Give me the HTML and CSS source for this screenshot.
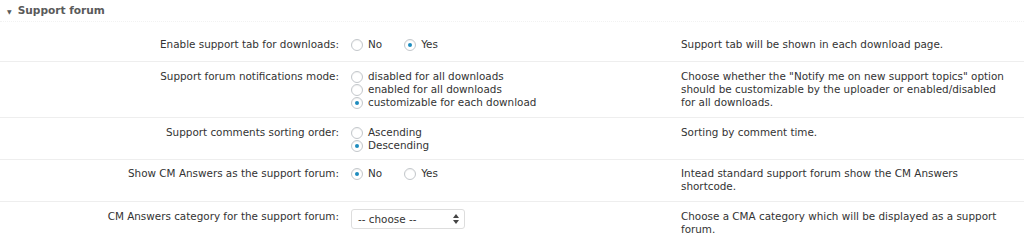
FILE: index.html
```html
<!DOCTYPE html>
<html lang="en">
<head>
    <meta charset="UTF-8">
    <title>Support forum settings</title>
    <link rel="stylesheet" href="styles.css">
</head>
<body>
    <div class="section-head">
        <span class="caret">&#9660;</span>
        <span class="section-title">Support forum</span>
    </div>

    <div class="settings">
        <div class="row">
            <div class="label">Enable support tab for downloads:</div>
            <div class="field">
                <div class="inline">
                    <span class="opt"><span class="radio"></span>No</span>
                    <span class="opt"><span class="radio checked"></span>Yes</span>
                </div>
            </div>
            <div class="desc">Support tab will be shown in each download page.</div>
        </div>

        <div class="row">
            <div class="label">Support forum notifications mode:</div>
            <div class="field">
                <div class="opt stack"><span class="radio"></span>disabled for all downloads</div>
                <div class="opt stack"><span class="radio"></span>enabled for all downloads</div>
                <div class="opt stack"><span class="radio checked"></span>customizable for each download</div>
            </div>
            <div class="desc">Choose whether the "Notify me on new support topics" option should be customizable by the uploader or enabled/disabled for all downloads.</div>
        </div>

        <div class="row tight">
            <div class="label">Support comments sorting order:</div>
            <div class="field">
                <div class="opt stack"><span class="radio"></span>Ascending</div>
                <div class="opt stack"><span class="radio checked"></span>Descending</div>
            </div>
            <div class="desc">Sorting by comment time.</div>
        </div>

        <div class="row tighter">
            <div class="label">Show CM Answers as the support forum:</div>
            <div class="field">
                <div class="inline">
                    <span class="opt"><span class="radio checked"></span>No</span>
                    <span class="opt"><span class="radio"></span>Yes</span>
                </div>
            </div>
            <div class="desc">Intead standard support forum show the CM Answers shortcode.</div>
        </div>

        <div class="row">
            <div class="label">CM Answers category for the support forum:</div>
            <div class="field">
                <div class="select">
                    <span>-- choose --</span>
                    <svg width="6" height="10" viewBox="0 0 6 10">
                        <path d="M3 0 L6 4 L0 4 Z M0 6 L6 6 L3 10 Z" fill="#444"/>
                    </svg>
                </div>
            </div>
            <div class="desc">Choose a CMA category which will be displayed as a support forum.</div>
        </div>
    </div>
</body>
</html>
```

FILE: styles.css
```css
body {
    margin: 0;
    background: #fff;
    font-family: "DejaVu Sans", Verdana, sans-serif;
    font-size: 10.4px;
    line-height: 13px;
    color: #333;
}
.section-head {
    display: flex;
    align-items: center;
    height: 21px;
    padding-left: 7px;
    border-bottom: 1px dotted #f2f2f2;
    color: #5a5a5a;
}
.caret {
    font-size: 6px;
    margin-right: 6px;
    margin-top: 1px;
}
.section-title {
    font-weight: bold;
    font-size: 10.6px;
}
.settings {
    margin-top: 8px;
}
.row {
    display: grid;
    grid-template-columns: 351px 330px 1fr;
    padding: 8px 0;
    border-bottom: 1px solid #eee;
}
.row.tight {
    padding-bottom: 7px;
}
.row.tighter {
    padding-top: 7px;
    padding-bottom: 8px;
}
.label {
    text-align: right;
    padding-right: 12px;
}
.desc {
    padding-right: 12px;
}
.inline {
    display: flex;
    gap: 22px;
    height: 17px;
    align-items: center;
    margin-top: -2px;
}
.opt {
    display: flex;
    align-items: center;
}
.stack {
    height: 13px;
}
.radio {
    box-sizing: border-box;
    width: 12px;
    height: 12px;
    border: 1px solid #c3c7cb;
    border-radius: 50%;
    margin-right: 5px;
    display: flex;
    align-items: center;
    justify-content: center;
    background: #fff;
    box-shadow: inset 0 1px 1px rgba(0,0,0,0.06);
}
.radio.checked::after {
    content: "";
    width: 4px;
    height: 4px;
    border-radius: 50%;
    background: #1e8cbe;
}
.select {
    box-sizing: border-box;
    width: 114px;
    height: 20px;
    margin-top: -1px;
    border: 1px solid #ddd;
    border-radius: 3px;
    display: flex;
    align-items: center;
    justify-content: space-between;
    padding: 0 5px 0 6px;
    color: #333;
}
.row:last-child {
    border-bottom: none;
}
```
